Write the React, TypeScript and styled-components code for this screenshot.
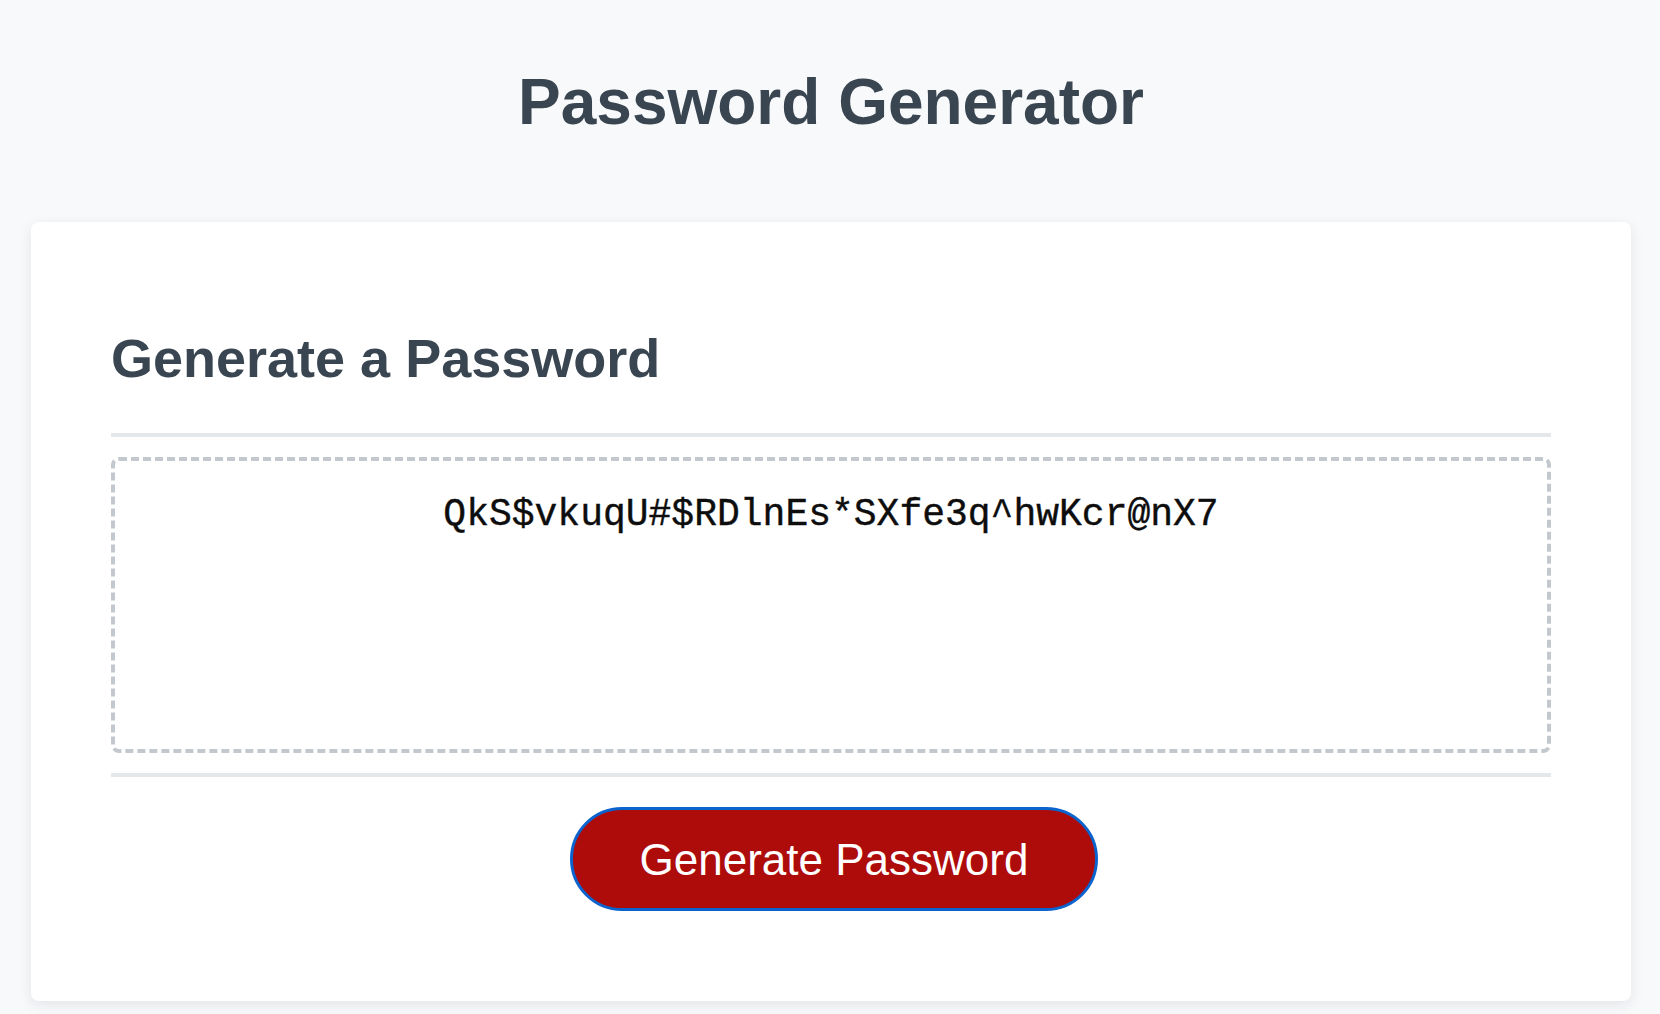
import React from "react";
import styled, { createGlobalStyle } from "styled-components";

const GlobalStyle = createGlobalStyle`
    html, body {
        margin: 0;
        padding: 0;
        background-color: #f8f9fb;
        font-family: "Liberation Sans", Arial, Helvetica, sans-serif;
    }
`

const Page = styled.div`
    display: flex;
    flex-direction: column;
    align-items: center;
    padding-top: 65px;
    padding-left: 2px;
    min-height: 1014px;
    box-sizing: border-box;
`

const PageTitle = styled.h1`
    margin: 0;
    font-size: 64px;
    line-height: 74px;
    font-weight: 700;
    color: #394651;
    text-align: center;
`

const Card = styled.div`
    margin-top: 83px;
    width: 1600px;
    box-sizing: border-box;
    padding: 80px 80px 90px;
    background-color: #ffffff;
    border-radius: 8px;
    box-shadow: 0 4px 14px rgba(20, 30, 45, 0.09);
    display: flex;
    flex-direction: column;
`

const CardHeader = styled.h2`
    margin: 25px 0 0;
    font-size: 54px;
    line-height: 62px;
    font-weight: 700;
    color: #394651;
`

const Divider = styled.div<{ $top: number; $bottom: number }>`
    height: 4px;
    background-color: #e5e8eb;
    margin-top: ${(p) => p.$top}px;
    margin-bottom: ${(p) => p.$bottom}px;
`

const PasswordBox = styled.div`
    height: 296px;
    box-sizing: border-box;
    border: 4px dashed #c3c8ce;
    border-radius: 8px;
    padding: 32px 20px 0;
    text-align: center;
    font-family: "Liberation Mono", "Courier New", monospace;
    font-size: 38px;
    line-height: 43px;
    color: #0d0d0d;
    -webkit-text-stroke: 0.4px #0d0d0d;
    word-break: break-all;
`

const ButtonRow = styled.div`
    display: flex;
    justify-content: center;
    padding-left: 6px;
`

const GenerateBtn = styled.button`
    font-family: "Liberation Sans", Arial, Helvetica, sans-serif;
    font-size: 44px;
    line-height: 51px;
    color: #ffffff;
    background-color: #ae0b0b;
    border: 3px solid #0b63ce;
    border-radius: 60px;
    padding: 24px 67px 23px;
    margin-top: 1px;
    cursor: pointer;
`

const App: React.FC = () => {
    const password = "QkS$vkuqU#$RDlnEs*SXfe3q^hwKcr@nX7";

    return (
        <>
            <GlobalStyle />
            <Page>
                <PageTitle>Password Generator</PageTitle>
                <Card>
                    <CardHeader>Generate a Password</CardHeader>
                    <Divider $top={44} $bottom={20} />
                    <PasswordBox>{password}</PasswordBox>
                    <Divider $top={20} $bottom={29} />
                    <ButtonRow>
                        <GenerateBtn>Generate Password</GenerateBtn>
                    </ButtonRow>
                </Card>
            </Page>
        </>
    )
}

export default App;
